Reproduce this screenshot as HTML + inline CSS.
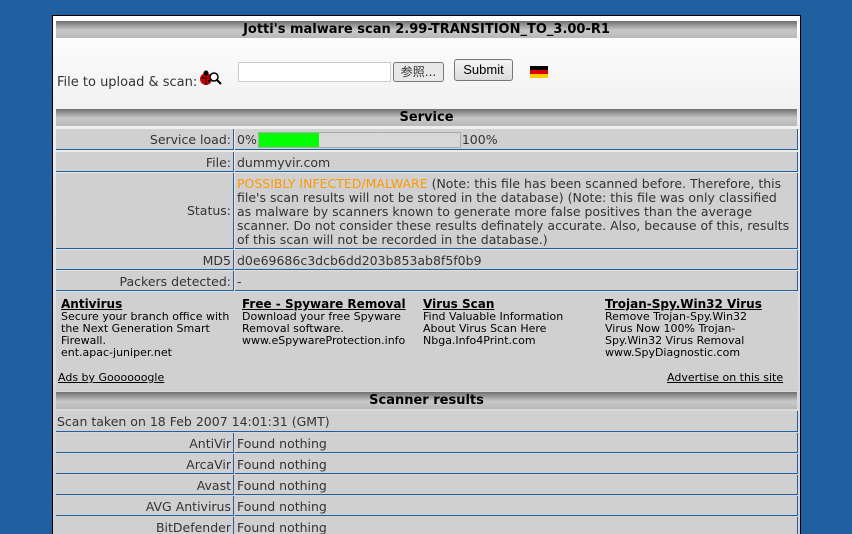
<!DOCTYPE html>
<html><head><meta charset="utf-8"><style>
*{margin:0;padding:0;box-sizing:border-box}
html,body{width:852px;height:534px;overflow:hidden}
body{position:relative;background:#2060a0;font-family:"DejaVu Sans","Liberation Sans","Noto Sans CJK JP",sans-serif;font-size:12.5px;color:#333}
#c{position:absolute;left:52px;top:15px;width:749px;height:530px;border:1px solid #000;background:linear-gradient(#fff,#e8e8e8 30%,#d0d0d0 100%)}
.a{position:absolute}
.h{position:absolute;left:56px;width:741px;height:17px;background:linear-gradient(#707070,#c8c8c8 55%,#b8b8b8);font-weight:bold;color:#000;text-align:center;font-size:13px;line-height:18px}
.l,.v{position:absolute;background:#d0d0d0;border-bottom:1px solid #2060a0;border-right:1px solid #2060a0;line-height:21px;white-space:nowrap}
.l{left:56px;width:178px;text-align:right;padding-right:2px}
.v{left:235px;width:563px;padding-left:2px}
.grey{position:absolute;left:56px;width:742px;background:#d0d0d0}
.ad{position:absolute;top:298px;font-size:11px;line-height:12px;color:#000}
.ad b{text-decoration:underline;font-size:12px;display:block;line-height:13px}
u{color:#000}
</style></head><body>
<div id="c"></div>
<div class="h" style="top:21px">Jotti's malware scan 2.99-TRANSITION_TO_3.00-R1</div>
<div class="a" style="left:57px;top:75px;font-size:13px">File to upload &amp; scan:</div>
<svg class="a" style="left:198px;top:69px" width="24" height="18" viewBox="0 0 24 18"><ellipse cx="8" cy="10" rx="6" ry="6" fill="#c00"/><circle cx="8" cy="4" r="2.5" fill="#000"/><line x1="8" y1="5" x2="8" y2="16" stroke="#000"/><circle cx="5" cy="9" r="1.2" fill="#000"/><circle cx="11" cy="12" r="1.2" fill="#000"/><circle cx="16" cy="8" r="4" fill="#fff" stroke="#000" stroke-width="1.5"/><line x1="19" y1="11" x2="23" y2="15" stroke="#000" stroke-width="2"/></svg>
<div class="a" style="left:238px;top:62px;width:153px;height:20px;background:#fff;border:1px solid #ccc"></div>
<div class="a" style="left:393px;top:62px;width:51px;height:20px;background:#e8e8e8;border:1px solid #777;border-radius:3px;font-size:12px;line-height:18px;text-align:center">参照...</div>
<div class="a" style="left:454px;top:59px;width:59px;height:22px;background:linear-gradient(#f4f4f4,#dcdcdc);border:1px solid #777;border-radius:3px;font-family:'Liberation Sans',sans-serif;font-size:13px;line-height:20px;text-align:center;color:#000">Submit</div>
<div class="a" style="left:530px;top:66px;width:18px;height:12px;background:linear-gradient(#000 33%,#d00 33%,#d00 66%,#fc0 66%)"></div>
<div class="h" style="top:109px">Service</div>
<div class="l" style="top:129px;height:21px">Service load:</div>
<div class="v" style="top:129px;height:21px">0%<span style="display:inline-block;vertical-align:-4px;width:203px;height:16px;border:1px solid #aaa;background:#d8d8d8;margin:0 1px"><span style="display:block;width:60px;height:14px;background:#0f0"></span></span>100%</div>
<div class="l" style="top:152px;height:20px">File:</div>
<div class="v" style="top:152px;height:20px">dummyvir.com</div>
<div class="l" style="top:173px;height:76px;line-height:76px">Status:</div>
<div class="v" style="top:173px;height:76px;white-space:normal;line-height:14px;padding-top:4px;padding-right:4px"><span style="color:#f90">POSSIBLY INFECTED/MALWARE</span> (Note: this file has been scanned before. Therefore, this file's scan results will not be stored in the database) (Note: this file was only classified as malware by scanners known to generate more false positives than the average scanner. Do not consider these results definately accurate. Also, because of this, results of this scan will not be recorded in the database.)</div>
<div class="l" style="top:250px;height:20px">MD5</div>
<div class="v" style="top:250px;height:20px">d0e69686c3dcb6dd203b853ab8f5f0b9</div>
<div class="l" style="top:271px;height:20px">Packers detected:</div>
<div class="v" style="top:271px;height:20px">-</div>
<div class="grey" style="top:292px;height:99px"></div>
<div class="ad" style="left:61px"><b>Antivirus</b>Secure your branch office with<br>the Next Generation Smart<br>Firewall.<br>ent.apac-juniper.net</div>
<div class="ad" style="left:242px"><b>Free - Spyware Removal</b>Download your free Spyware<br>Removal software.<br>www.eSpywareProtection.info</div>
<div class="ad" style="left:423px"><b>Virus Scan</b>Find Valuable Information<br>About Virus Scan Here<br>Nbga.Info4Print.com</div>
<div class="ad" style="left:605px"><b>Trojan-Spy.Win32 Virus</b>Remove Trojan-Spy.Win32<br>Virus Now 100% Trojan-<br>Spy.Win32 Virus Removal<br>www.SpyDiagnostic.com</div>
<div class="ad" style="left:58px;top:372px"><u>Ads by Goooooogle</u></div>
<div class="ad" style="left:667px;top:372px"><u>Advertise on this site</u></div>
<div class="h" style="top:392px">Scanner results</div>
<div class="l" style="top:411px;height:21px;width:742px;text-align:left;padding-left:1px;border-right:1px solid #2060a0">Scan taken on 18 Feb 2007 14:01:31 (GMT)</div>
<div class="l" style="top:433px;height:20px">AntiVir</div><div class="v" style="top:433px;height:20px">Found nothing</div>
<div class="l" style="top:454px;height:20px">ArcaVir</div><div class="v" style="top:454px;height:20px">Found nothing</div>
<div class="l" style="top:475px;height:20px">Avast</div><div class="v" style="top:475px;height:20px">Found nothing</div>
<div class="l" style="top:496px;height:20px">AVG Antivirus</div><div class="v" style="top:496px;height:20px">Found nothing</div>
<div class="l" style="top:517px;height:20px">BitDefender</div><div class="v" style="top:517px;height:20px">Found nothing</div>
</body></html>
